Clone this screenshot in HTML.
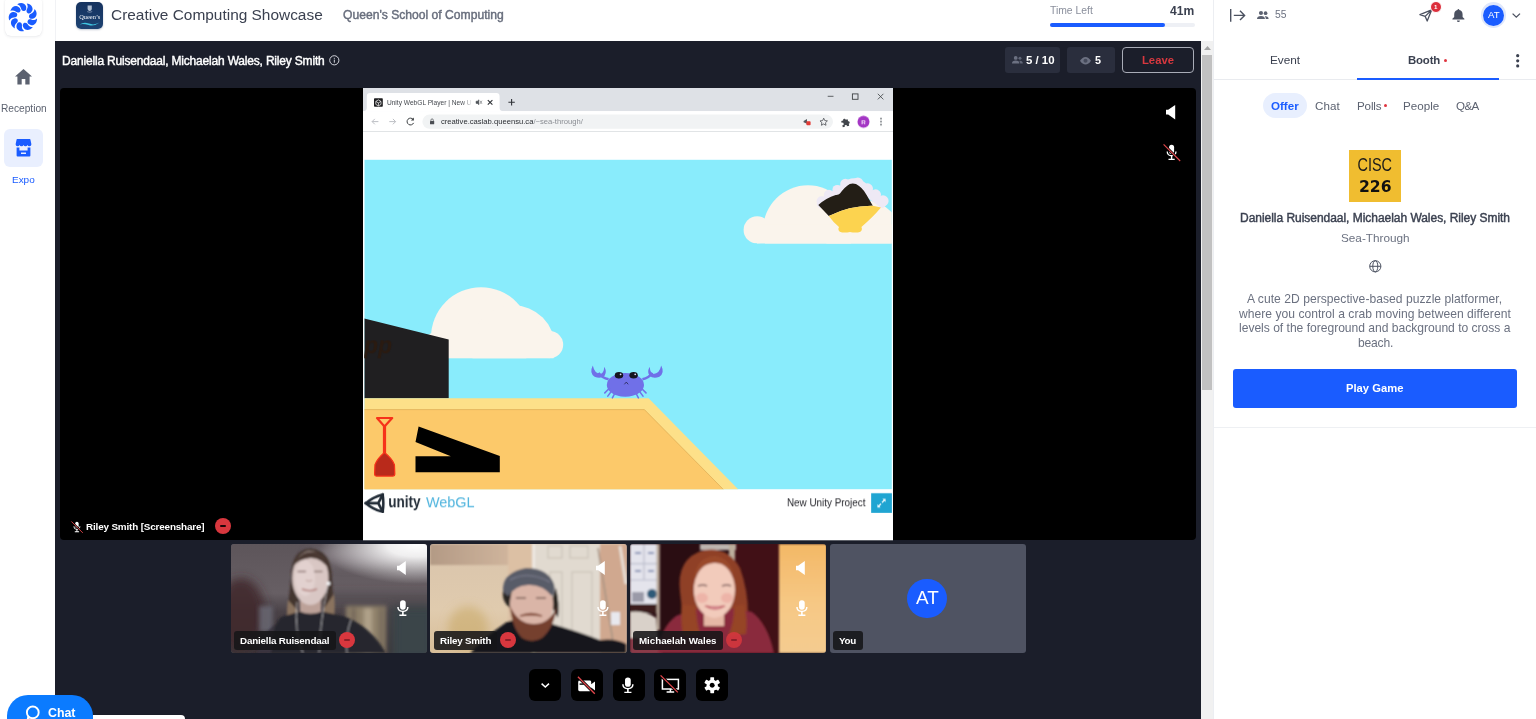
<!DOCTYPE html>
<html lang="en">
<head>
<meta charset="utf-8">
<title>Creative Computing Showcase</title>
<style>
*{box-sizing:border-box;margin:0;padding:0}
html,body{width:1536px;height:719px;overflow:hidden;background:#fff;font-family:"Liberation Sans",sans-serif;color:#3b4150}
body{position:relative}
.a{position:absolute}
svg{position:absolute;overflow:visible;will-change:transform}
.t{position:absolute;white-space:nowrap;line-height:1;will-change:transform}
#side{position:absolute;left:0;top:0;width:56px;height:719px;background:#fff}
#head{position:absolute;left:56px;top:0;width:1158px;height:41px;background:#fff}
#stage{position:absolute;left:55px;top:41px;width:1145.5px;height:678px;background:#1b1e2a}
#sbar{position:absolute;left:1200.5px;top:41px;width:13.5px;height:678px;background:#f1f1f1}
#panel{position:absolute;left:1214px;top:0;width:322px;height:719px;background:#fff}
.chip{position:absolute;background:#2a2e3d;border-radius:3px}
.tag{position:absolute;background:rgba(22,22,24,.88);border-radius:3px}
.minus{position:absolute;width:16px;height:16px;border-radius:50%;background:#d8373e}
.minus:after{content:"";position:absolute;left:5px;top:7px;width:6px;height:2px;background:#8e1f28;border-radius:1px}
.thumb{position:absolute;top:543.6px;width:196.3px;height:109.3px;border-radius:3px;overflow:hidden;background:#4f5362}
.cbtn{position:absolute;top:669px;width:32px;height:32px;border-radius:6px;background:#000}
.minus.k:after{background:#1c0608;left:4.7px;width:6.6px;top:6.8px;height:2.4px}
</style>
</head>
<body>
<!-- sidebar -->
<div id="side">
  <div class="a" style="left:4.5px;top:-4px;width:37.5px;height:40px;border-radius:6px;background:#fff;box-shadow:0 1px 3px rgba(40,50,80,.09),0 0 1px rgba(40,50,80,.10)"></div>
  <svg style="left:8.9px;top:2.7px" width="28" height="28" viewBox="-14 -14 28 28"><g fill="#1a5cff"><path d="M-5.8,-12.8 C-2.5,-15.1 2.2,-14.2 3.1,-10.6 C3.6,-8.4 3.1,-6.4 1.2,-6 C-0.9,-5.7 -1.8,-7.4 -2.1,-8.9 C-2.5,-10.7 -3.7,-12.1 -5.8,-12.8Z" transform="rotate(0)"/><path d="M-5.8,-12.8 C-2.5,-15.1 2.2,-14.2 3.1,-10.6 C3.6,-8.4 3.1,-6.4 1.2,-6 C-0.9,-5.7 -1.8,-7.4 -2.1,-8.9 C-2.5,-10.7 -3.7,-12.1 -5.8,-12.8Z" transform="rotate(40)"/><path d="M-5.8,-12.8 C-2.5,-15.1 2.2,-14.2 3.1,-10.6 C3.6,-8.4 3.1,-6.4 1.2,-6 C-0.9,-5.7 -1.8,-7.4 -2.1,-8.9 C-2.5,-10.7 -3.7,-12.1 -5.8,-12.8Z" transform="rotate(80)"/><path d="M-5.8,-12.8 C-2.5,-15.1 2.2,-14.2 3.1,-10.6 C3.6,-8.4 3.1,-6.4 1.2,-6 C-0.9,-5.7 -1.8,-7.4 -2.1,-8.9 C-2.5,-10.7 -3.7,-12.1 -5.8,-12.8Z" transform="rotate(120)"/><path d="M-5.8,-12.8 C-2.5,-15.1 2.2,-14.2 3.1,-10.6 C3.6,-8.4 3.1,-6.4 1.2,-6 C-0.9,-5.7 -1.8,-7.4 -2.1,-8.9 C-2.5,-10.7 -3.7,-12.1 -5.8,-12.8Z" transform="rotate(160)"/><path d="M-5.8,-12.8 C-2.5,-15.1 2.2,-14.2 3.1,-10.6 C3.6,-8.4 3.1,-6.4 1.2,-6 C-0.9,-5.7 -1.8,-7.4 -2.1,-8.9 C-2.5,-10.7 -3.7,-12.1 -5.8,-12.8Z" transform="rotate(200)"/><path d="M-5.8,-12.8 C-2.5,-15.1 2.2,-14.2 3.1,-10.6 C3.6,-8.4 3.1,-6.4 1.2,-6 C-0.9,-5.7 -1.8,-7.4 -2.1,-8.9 C-2.5,-10.7 -3.7,-12.1 -5.8,-12.8Z" transform="rotate(240)"/><path d="M-5.8,-12.8 C-2.5,-15.1 2.2,-14.2 3.1,-10.6 C3.6,-8.4 3.1,-6.4 1.2,-6 C-0.9,-5.7 -1.8,-7.4 -2.1,-8.9 C-2.5,-10.7 -3.7,-12.1 -5.8,-12.8Z" transform="rotate(280)"/><path d="M-5.8,-12.8 C-2.5,-15.1 2.2,-14.2 3.1,-10.6 C3.6,-8.4 3.1,-6.4 1.2,-6 C-0.9,-5.7 -1.8,-7.4 -2.1,-8.9 C-2.5,-10.7 -3.7,-12.1 -5.8,-12.8Z" transform="rotate(320)"/></g></svg>
  <div class="a" style="left:55px;top:0;width:1px;height:41px;background:#f1f2f5"></div>
  <!-- home -->
  <svg style="left:15px;top:69px" width="17" height="15.5" viewBox="0 0 17 15.5"><path fill="#5c6270" d="M8.5,0 L17,7.6 L14.6,7.6 L14.6,15.5 L10.3,15.5 L10.3,10 L6.7,10 L6.7,15.5 L2.4,15.5 L2.4,7.6 L0,7.6Z"/></svg>
  <!-- expo active -->
  <div class="a" style="left:4.2px;top:129px;width:38.6px;height:38px;border-radius:6px;background:#e9effe"></div>
  <svg style="left:15px;top:139.4px" width="17" height="17.6" viewBox="0 0 17 17.6"><g fill="#1a5cff"><path d="M1.6,0.6 Q1.6,0 2.2,0 L14.8,0 Q15.4,0 15.4,0.6 L16.4,5.2 Q16.4,7.2 14.4,7.2 Q12.9,7.2 12.5,6 Q12,7.2 10.5,7.2 Q9,7.2 8.5,6 Q8,7.2 6.5,7.2 Q5,7.2 4.5,6 Q4.1,7.2 2.6,7.2 Q0.6,7.2 0.6,5.2Z"/><path d="M1.6,8.6 L15.4,8.6 L15.4,16.6 Q15.4,17.6 14.4,17.6 L2.6,17.6 Q1.6,17.6 1.6,16.6Z M4.4,8.6 L4.4,11.4 L12.6,11.4 L12.6,8.6Z M6,13.4 L6,14.9 L11,14.9 L11,13.4Z" fill-rule="evenodd"/></g></svg>
</div>
<!-- header -->
<div id="head"></div>
<div class="a" style="left:75.7px;top:1.6px;width:27.3px;height:27.3px;border-radius:5px;background:linear-gradient(180deg,#16335f,#1d4272);overflow:hidden;box-shadow:0 1px 2px rgba(20,40,80,.25)">
  <svg style="left:0;top:0" width="27.3" height="27.3" viewBox="0 0 27.3 27.3">
    <path d="M11.6,3.4 h4.2 v3.6 q0,1.6 -2.1,2.2 q-2.1,-0.6 -2.1,-2.2z" fill="#c9d3e3" opacity=".85"/>
    <path d="M11.2,9.6 q2.5,1.4 5,0" stroke="#c9d3e3" stroke-width=".7" fill="none" opacity=".7"/>
    <text x="13.7" y="17.4" font-family="Liberation Serif,serif" font-size="6.4" fill="#f4f6fa" text-anchor="middle" textLength="21" lengthAdjust="spacingAndGlyphs">Queen’s</text>
    <path d="M3.6,22.4 Q8,19.6 13,21.6 T23.6,20.6 Q18,24.8 12.6,23 T3.6,22.4Z" fill="#3fc4e0"/>
  </svg>
</div>
<!-- time left bar -->
<div class="a" style="left:1050px;top:23.2px;width:144.5px;height:3.6px;border-radius:2px;background:#eef0f5"></div>
<div class="a" style="left:1050px;top:23.2px;width:115px;height:3.6px;border-radius:2px;background:#1a5cff"></div>
<!-- stage -->
<div id="stage"></div>
<div id="sbar">
  <svg style="left:3.2px;top:4.6px" width="7" height="4" viewBox="0 0 7 4"><path d="M0,4 L3.5,0 L7,4Z" fill="#a3a3a3"/></svg>
  <div class="a" style="left:1.7px;top:13.6px;width:10.2px;height:335px;background:#c1c1c1"></div>
</div>
<!-- info icon -->
<svg style="left:328.6px;top:54.8px" width="10.6" height="10.6" viewBox="0 0 10.6 10.6"><circle cx="5.3" cy="5.3" r="4.6" fill="none" stroke="#e6e8ee" stroke-width=".9"/><rect x="4.85" y="4.6" width=".9" height="3.1" fill="#e6e8ee"/><rect x="4.85" y="2.8" width=".9" height="1" fill="#e6e8ee"/></svg>
<!-- chips -->
<div class="chip" style="left:1005px;top:47.4px;width:55.4px;height:25.4px"></div>
<svg style="left:1011.6px;top:56.4px" width="10.8" height="7.4" viewBox="0 0 10.8 7.4"><g fill="#6c7182"><circle cx="3.7" cy="1.9" r="1.9"/><path d="M0,7.4 Q0,4.6 3.7,4.6 Q7.4,4.6 7.4,7.4Z"/><circle cx="8" cy="2.3" r="1.5" opacity=".85"/><path d="M8.2,7.4 Q8.3,5.6 7.2,4.9 Q10.8,4.6 10.8,7.4Z" opacity=".85"/></g></svg>
<div class="chip" style="left:1067.2px;top:47.4px;width:47.8px;height:25.4px"></div>
<svg style="left:1080.4px;top:56.5px" width="11" height="7.6" viewBox="0 0 10.8 7.4" preserveAspectRatio="none"><path d="M0,3.7 Q2.4,0 5.4,0 Q8.4,0 10.8,3.7 Q8.4,7.4 5.4,7.4 Q2.4,7.4 0,3.7Z" fill="#6c7182"/><circle cx="5.4" cy="3.7" r="2" fill="#454a5b"/></svg>
<div class="a" style="left:1121.6px;top:46.9px;width:72.8px;height:26.3px;border:1px solid #a9acb7;border-radius:4px"></div>
<!-- main video -->
<div class="a" style="left:60.4px;top:87.7px;width:1135.2px;height:452.3px;background:#000;border-radius:4px"></div>
<!-- screenshare -->
<svg style="left:363px;top:87.7px" width="530" height="452.3" viewBox="363 87.7 530 452.3" font-family="Liberation Sans,sans-serif">
  <defs>
    <linearGradient id="fadeTab" x1="0" x2="1" y1="0" y2="0"><stop offset="0" stop-color="#fff" stop-opacity="0"/><stop offset="1" stop-color="#fff"/></linearGradient>
    <clipPath id="cv"><rect x="364.3" y="159.3" width="527.6" height="329.8"/></clipPath>
    <clipPath id="c1"><rect x="364" y="280" width="240" height="78"/></clipPath>
    <clipPath id="c2"><rect x="730" y="170" width="161.9" height="73.2"/></clipPath>
  </defs>
  <rect x="363" y="87.7" width="530" height="452.3" fill="#fff"/>
  <!-- chrome tab strip -->
  <rect x="363" y="87.7" width="530" height="23.2" fill="#dee1e6"/>
  <path d="M363.8,110.9 Q366.6,110.6 366.8,107.8 L366.8,96 Q366.9,92.9 370,92.8 L496.4,92.8 Q499.5,92.9 499.6,96 L499.6,107.8 Q499.8,110.6 502.6,110.9Z" fill="#fff"/>
  <rect x="374" y="98" width="8.8" height="8.4" rx=".8" fill="#1d1d1f"/>
  <path d="M378.4,99.6 l2.6,1.5 v3 l-2.6,1.5 l-2.6,-1.5 v-3z M378.4,102.6 v3 M378.4,102.6 l2.6,-1.5 M378.4,102.6 l-2.6,-1.5" fill="none" stroke="#fff" stroke-width=".7"/>
  <text x="386.9" y="104.3" font-size="6.6" fill="#45494f" textLength="84.7" lengthAdjust="spacingAndGlyphs">Unity WebGL Player | New U</text>
  <rect x="462" y="96" width="11" height="12" fill="url(#fadeTab)"/>
  <path d="M476,100.9 h1.3 l1.6,-1.4 v5 l-1.6,-1.4 h-1.3z M480,100.4 l2,3.2 M482,100.4 l-2,3.2" fill="#50545a" stroke="#50545a" stroke-width=".5"/>
  <path d="M487.8,99.8 l4.6,4.6 M492.4,99.8 l-4.6,4.6" stroke="#2f3237" stroke-width="1.1"/>
  <path d="M508.4,102 h6.4 M511.6,98.8 v6.4" stroke="#2f3237" stroke-width="1.1"/>
  <path d="M827.7,96 h5.8" stroke="#3c4043" stroke-width=".8"/>
  <rect x="852.4" y="93.6" width="5.6" height="5.4" fill="none" stroke="#3c4043" stroke-width=".9"/>
  <path d="M877.8,93.5 l5.6,5.6 M883.4,93.5 l-5.6,5.6" stroke="#3c4043" stroke-width=".8"/>
  <!-- toolbar -->
  <rect x="363" y="110.9" width="530" height="20.3" fill="#fff"/>
  <rect x="363" y="131" width="530" height=".7" fill="#d5d8dc"/>
  <path d="M378.4,121.3 h-6.2 m2.6,-2.7 l-2.7,2.7 l2.7,2.7" fill="none" stroke="#b5b8bd" stroke-width=".9"/>
  <path d="M389.3,121.3 h6.2 m-2.6,-2.7 l2.7,2.7 l-2.7,2.7" fill="none" stroke="#b5b8bd" stroke-width=".9"/>
  <path d="M413.2,119.2 A3.4,3.4 0 1 0 413.6,122.6" fill="none" stroke="#3c4043" stroke-width="1"/>
  <path d="M413.9,117.2 v3 h-3z" fill="#3c4043"/>
  <rect x="422.4" y="114.3" width="410.6" height="14.2" rx="7.1" fill="#f1f3f4"/>
  <rect x="430" y="120.6" width="4.2" height="3.4" rx=".5" fill="#4a4d52"/>
  <path d="M430.9,120.8 v-1 a1.2,1.2 0 0 1 2.4,0 v1" fill="none" stroke="#4a4d52" stroke-width=".7"/>
  <text x="440.9" y="124" font-size="7.6" textLength="142" lengthAdjust="spacingAndGlyphs"><tspan fill="#2b2e33">creative.caslab.queensu.ca</tspan><tspan fill="#8a8d93">/~sea-through/</tspan></text>
  <path d="M803.6,120.6 l3.4,-1.8 v4.6 l-3.4,-1.4z" fill="#55595f"/>
  <rect x="806.4" y="121" width="4.2" height="4" rx=".8" fill="#e23b35"/>
  <path d="M823.7,117.9 l1.1,2.4 l2.6,.3 l-1.9,1.8 l.5,2.6 l-2.3,-1.3 l-2.3,1.3 l.5,-2.6 l-1.9,-1.8 l2.6,-.3z" fill="none" stroke="#4a4d52" stroke-width=".8"/>
  <path d="M841.8,119.6 h2 a1.3,1.3 0 1 1 2.6,0 h2 v2 a1.3,1.3 0 1 1 0,2.6 v2 h-2.4 a1.1,1.1 0 1 0 -2,0 h-2.2 v-2.2 a1.2,1.2 0 1 0 0,-2.2z" fill="#42464b" transform="rotate(-14 845.5 122.5)"/>
  <circle cx="863.5" cy="121.4" r="6" fill="#a436c4"/>
  <text x="863.5" y="123.6" font-size="6.2" fill="#f3dcf8" text-anchor="middle" font-weight="700">R</text>
  <circle cx="881" cy="118.4" r=".8" fill="#55595f"/><circle cx="881" cy="121.4" r=".8" fill="#55595f"/><circle cx="881" cy="124.4" r=".8" fill="#55595f"/>
  <!-- game canvas -->
  <g clip-path="url(#cv)">
    <rect x="364.3" y="159.3" width="527.6" height="329.8" fill="#89ecfc"/>
    <g fill="#faf4ec" clip-path="url(#c1)">
      <circle cx="481" cy="337" r="50"/><circle cx="513" cy="347" r="42"/><circle cx="549.6" cy="344.4" r="13.6"/><circle cx="436" cy="345" r="13"/><rect x="436" y="338" width="114" height="20"/>
    </g>
    <g fill="#faf4ec" clip-path="url(#c2)">
      <circle cx="757.2" cy="229.6" r="13.6"/><circle cx="808" cy="230" r="45"/><circle cx="864" cy="238" r="38"/><rect x="757" y="224" width="136" height="20"/>
    </g>
    <g fill="#eee9f5">
      <path d="M821,203.6 Q828,197 836,193.6 Q840,192 845,186 Q851,180.6 858,182.6 Q866,186.6 871,195 L882,203.4" fill="none" stroke="#eee9f5" stroke-width="8" stroke-linecap="round" stroke-linejoin="round"/>
      <circle cx="821.6" cy="201" r="5"/><circle cx="829" cy="194.6" r="5.2"/><circle cx="837.4" cy="189.6" r="5"/><circle cx="845.4" cy="183.6" r="5.2"/><circle cx="857.8" cy="182.6" r="5.4"/><circle cx="867.6" cy="188.4" r="5.4"/><circle cx="875.6" cy="194.4" r="5.4"/><circle cx="883" cy="200.6" r="5.6"/>
    </g>
    <path d="M818.3,204.6 Q826,197.6 835.7,194.6 Q838.6,194.8 840,193.2 Q844.6,186.6 849.8,183.6 Q853,182.6 856,183.8 Q862.4,187.2 866.6,194.6 L872.8,205.4 Q850,205 828.8,215.6Z" fill="#231e16"/>
    <path d="M828.8,215.6 Q850,205 872.8,205.4 L881,207.3 Q872,218 861.4,226.6 Q862.8,229.6 860.4,231.4 Q856,233 850,231.6 Q844,233 839.8,231.4 Q837.4,229.6 839,226.6 Q833,221.6 828.8,215.6Z" fill="#fcd34f"/>
    <path d="M364.3,318.2 L448.7,339.2 L448.7,398 L364.3,398Z" fill="#201f21"/>
    <text x="364" y="353" font-size="23" font-weight="700" font-style="italic" fill="#2f1a0c" opacity=".7">pp</text>
    <path d="M364.3,398 L648.6,398 L738.4,489.2 L364.3,489.2Z" fill="#fde089"/>
    <path d="M364.3,409.3 L644.4,409.3 L723.4,489.2 L364.3,489.2Z" fill="#fcc96a"/>
    <path d="M364.3,409.3 L644.4,409.3 L723.4,489.2" fill="none" stroke="#d4a24c" stroke-width=".7" opacity=".8"/>
    <!-- crab -->
    <g fill="#7070e8" stroke="#7070e8">
      <ellipse cx="625.4" cy="384.6" rx="18.6" ry="11.8" stroke="none"/>
      <path d="M608.6,379 Q602,377.6 598.6,372.6" fill="none" stroke-width="2.4"/>
      <path d="M642.4,379 Q649,377.6 652.4,372.6" fill="none" stroke-width="2.4"/>
      <path d="M592.8,365.2 Q589,372.6 594.6,376.4 Q600.6,378.8 604.6,375.4 Q607.4,370.8 604,366.4 Q604.6,372 600.6,373.6 Q594.6,373.6 592.8,365.2Z" stroke="none"/>
      <path d="M661.2,365.2 Q665,372.6 659.4,376.4 Q653.4,378.8 649.4,375.4 Q646.6,370.8 650,366.4 Q649.4,372 653.4,373.6 Q659.4,373.6 661.2,365.2Z" stroke="none"/>
      <path d="M609.4,388 l-4.6,4.6 M611.4,391 l-3.6,4.8 M614.6,393.4 l-2.2,4.2 M641.4,388 l4.6,4.6 M639.4,391 l3.6,4.8 M636.2,393.4 l2.2,4.2" fill="none" stroke-width="1.5" stroke-linecap="round"/>
    </g>
    <ellipse cx="619" cy="375" rx="4.2" ry="3.3" fill="#15151f"/><ellipse cx="633.6" cy="375" rx="4.2" ry="3.3" fill="#15151f"/>
    <circle cx="620.6" cy="374" r=".9" fill="#d8d8f0"/><circle cx="635.2" cy="374" r=".9" fill="#d8d8f0"/>
    <path d="M624.4,384 l1.9,-2.2 l1.9,2.2" fill="none" stroke="#23234a" stroke-width=".8"/>
    <!-- shovel -->
    <path d="M377,417.7 L392.2,417.7 L384.5,426.2Z" fill="none" stroke="#f6321a" stroke-width="2.2" stroke-linejoin="round"/>
    <path d="M384.5,425.6 L384.5,454" stroke="#f6321a" stroke-width="3.2"/>
    <path d="M384.5,452.2 Q377,458.6 375,464.4 L374.6,474 Q374.6,475.8 376.4,475.8 L393,475.8 Q394.8,475.8 394.8,474 L394.4,464.4 Q392.4,458.6 384.5,452.2Z" fill="#b92a1b" stroke="#f6321a" stroke-width="1.3" stroke-linejoin="round"/>
    <!-- wedge -->
    <path d="M418.6,426.2 L499.8,455.6 L499.8,472 L415.5,472 L415.5,456 L450.8,456 L415.5,441.6Z" fill="#000"/>
  </g>
  <!-- footer -->
  <g fill="none" stroke="#222c37" stroke-width="2.6" stroke-linejoin="round" stroke-linecap="round">
    <path d="M365.8,502.9 Q373,496.8 382.6,494.2 Q384,502.9 382.6,511.6 Q373,509 365.8,502.9Z"/>
    <path d="M365.6,502.9 L378.2,502.9 M382.8,494.2 L378.2,502.9 L382.8,511.6"/>
  </g>
  <text x="388.3" y="506.8" font-size="16.2" font-weight="700" fill="#222c37" textLength="32.2" lengthAdjust="spacingAndGlyphs">unity</text>
  <text x="426" y="506.8" font-size="15.3" fill="#4db3dd" textLength="48.5" lengthAdjust="spacingAndGlyphs">WebGL</text>
  <text x="787" y="505.8" font-size="10.2" fill="#1e1e24" textLength="78.4" lengthAdjust="spacingAndGlyphs">New Unity Project</text>
  <rect x="871.1" y="492.9" width="20.8" height="19.9" fill="#20a5d2"/>
  <path d="M885.6,498.6 h-3.2 l1.1,1.1 l-2,2 l1,1 l2,-2 l1.1,1.1z M877.4,507.2 h3.2 l-1.1,-1.1 l2,-2 l-1,-1 l-2,2 l-1.1,-1.1z" fill="#e9f7fc"/>
</svg>
<!-- main video overlays -->
<svg style="left:1165.8px;top:105px" width="9.2" height="14.4" viewBox="0 0 9.2 14.4"><path d="M0,4.8 L2.2,4.8 L9.2,0 L9.2,14.4 L2.2,9.6 L0,9.6Z" fill="#fff"/></svg>
<svg style="left:1163px;top:143.6px" width="18" height="18" viewBox="0 0 18 18"><g fill="#fff"><rect x="6.1" y=".8" width="5" height="9.2" rx="2.5"/><path d="M3.6,7.4 h1.3 a3.7,3.7 0 0 0 7.4,0 h1.3 a5,5 0 0 1 -4.3,4.9 v2.4 h2.4 v1.4 h-6.2 v-1.4 h2.4 v-2.4 a5,5 0 0 1 -4.3,-4.9z"/></g><path d="M.6,.4 L17.2,17" stroke="#000" stroke-width="2.6"/><path d="M.6,.4 L17.2,17" stroke="#e5484d" stroke-width="1.1"/></svg>
<svg style="left:70.6px;top:521.4px" width="12.4" height="12.8" viewBox="0 0 18 18"><g fill="#fff"><rect x="6.1" y=".8" width="5" height="9.2" rx="2.5"/><path d="M3.6,7.4 h1.3 a3.7,3.7 0 0 0 7.4,0 h1.3 a5,5 0 0 1 -4.3,4.9 v2.4 h2.4 v1.4 h-6.2 v-1.4 h2.4 v-2.4 a5,5 0 0 1 -4.3,-4.9z"/></g><path d="M.6,.4 L17.2,17" stroke="#000" stroke-width="2.6"/><path d="M.6,.4 L17.2,17" stroke="#e5484d" stroke-width="1.3"/></svg>
<div class="minus k" style="left:214.9px;top:517.8px"></div>
<!-- thumbnails -->
<div class="thumb" style="left:230.8px">
  <svg style="left:0;top:0" width="196.4" height="109.3" viewBox="0 0 196.4 109.3">
    <defs>
      <filter id="b1" x="-20%" y="-20%" width="140%" height="140%"><feGaussianBlur stdDeviation="0.8"/></filter>
      <filter id="b2" x="-20%" y="-20%" width="140%" height="140%"><feGaussianBlur stdDeviation="2"/></filter>
      <filter id="b3" x="-30%" y="-30%" width="160%" height="160%"><feGaussianBlur stdDeviation="5"/></filter>
      <linearGradient id="t1bg" x1="0" y1="0" x2="0" y2="1"><stop offset="0" stop-color="#5d555a"/><stop offset=".45" stop-color="#675f64"/><stop offset=".62" stop-color="#4a4247"/><stop offset="1" stop-color="#3b3438"/></linearGradient>
      <radialGradient id="t1fl" cx="186" cy="2" r="78" gradientUnits="userSpaceOnUse" gradientTransform="translate(188 0) scale(1.25 .5) translate(-188 0)"><stop offset="0" stop-color="#fff"/><stop offset=".3" stop-color="#fff" stop-opacity=".9"/><stop offset="1" stop-color="#fff" stop-opacity="0"/></radialGradient>
    </defs>
    <rect width="196.4" height="109.3" fill="url(#t1bg)"/>
    <g filter="url(#b3)">
      <ellipse cx="125" cy="12" rx="50" ry="10" fill="#857d83" opacity=".6"/>
      <ellipse cx="10" cy="70" rx="24" ry="36" fill="#40282e" opacity=".9"/>
      <rect x="160" y="62" width="44" height="56" fill="#3a4549"/>
      <rect x="96" y="50" width="110" height="6" fill="#4e464c"/>
    </g>
    <rect width="196.4" height="109.3" fill="url(#t1fl)"/>
    <g filter="url(#b2)">
      <rect x="28" y="62" width="14" height="26" fill="#6c6c76" opacity=".8"/>
      <rect x="115" y="62" width="40" height="50" fill="#8f816b"/>
      <rect x="120" y="64" width="5" height="48" fill="#75685a"/><rect x="133" y="64" width="8" height="48" fill="#b0a28a"/><rect x="148" y="64" width="4" height="48" fill="#75685a"/>
    </g>
    <g filter="url(#b1)">
      <path d="M60,34 Q60,5 80,4.500 Q100,6 101,34 L103,70 Q100,80 93,76 L91,52 L68,52 L66,76 Q60,82 56,72Z" fill="#43342f"/>
      <path d="M57,56 Q54,76 60,80 L68,68Z M103,50 Q106,76 98,80 L92,66Z" fill="#8a735e"/>
      <rect x="69" y="54" width="21" height="18" fill="#bca198"/>
      <ellipse cx="79.4" cy="34" rx="18.2" ry="27" fill="#d9c7c4"/>
      <ellipse cx="74" cy="34" rx="10" ry="18" fill="#e6d6d4" opacity=".7"/>
      <path d="M62.500,22 Q69,7 81,7.500 Q95,9 98.500,26 Q90,13 79,14 Q68,15 62.500,22Z" fill="#4a3932"/>
      <path d="M71,45 Q78.500,48.500 86,45" stroke="#b07a76" stroke-width="1.700" fill="none"/>
      <path d="M66.500,27.500 h8.500 M83,27.500 h8.500" stroke="#8d7672" stroke-width="1.500"/>
      <path d="M75,36 q3,2.500 6,0" stroke="#c4a8a4" stroke-width="1.200" fill="none"/>
      <path d="M36,109.300 Q40,84 50,73 L69,67.500 Q79,72 91,67.500 L112,72 Q140,82 155,109.300Z" fill="#27262d"/>
      <path d="M26,109.300 Q30,92 44,80 L40,109.300Z" fill="#3a3640"/>
      <path d="M66,58 Q63,88 72,109.300 M96.500,42 Q89,80 88,109.300 M120,76 Q114,92 116,109.300" stroke="#d4d4d8" stroke-width=".9" fill="none" opacity=".8"/>
      <circle cx="97.400" cy="39.500" r="1.900" fill="#f6f6f8"/>
    </g>
  </svg>
</div>
<div class="thumb" style="left:430.3px">
  <svg style="left:0;top:0" width="196.4" height="109.3" viewBox="0 0 196.4 109.3">
    <defs><linearGradient id="t2band" x1="0" x2="1" y1="0" y2="0"><stop offset="0" stop-color="#b39a85"/><stop offset="1" stop-color="#cfb49c"/></linearGradient><linearGradient id="t2bg" x1="0" y1="0" x2="0" y2="1"><stop offset="0" stop-color="#d9c4ac"/><stop offset=".6" stop-color="#e0cbae"/><stop offset="1" stop-color="#d8be98"/></linearGradient></defs>
    <rect width="196.4" height="109.3" fill="url(#t2bg)"/>
    <g filter="url(#b3)"><ellipse cx="38" cy="84" rx="20" ry="22" fill="#c6a55c" opacity=".5"/></g>
    <g filter="url(#b1)">
      <rect x="0" y="0" width="78" height="21" fill="url(#t2band)"/>
      <rect x="78" y="0" width="25" height="109" fill="#dcc0a4"/>
      <rect x="102.4" y="0" width="68" height="109.3" fill="#e1dad0"/>
      <rect x="102.4" y="0" width="2.4" height="109.3" fill="#f0ece6"/>
      <rect x="118" y="2" width="14" height="12" fill="none" stroke="#cbc3b8" stroke-width="1.2"/><rect x="140" y="2" width="18" height="12" fill="none" stroke="#cbc3b8" stroke-width="1.2"/>
      <rect x="120" y="28" width="12" height="62" fill="none" stroke="#cbc3b8" stroke-width="1.2"/><rect x="142" y="28" width="20" height="70" fill="none" stroke="#cbc3b8" stroke-width="1.2"/>
      <rect x="170" y="0" width="27" height="109.3" fill="#d0a88f"/>
      <path d="M168,4 L184,104" stroke="#a89484" stroke-width="1.6"/><path d="M190,2 L196,40" stroke="#e6ddd4" stroke-width="3"/>
      <rect x="181" y="68" width="9" height="13" fill="#e8e8ee"/>
      <path d="M40,109.3 Q56,92 74,80 Q80,74 92,78 L122,80 Q150,88 170,96 Q186,94 196.4,100 L196.4,109.3Z" fill="#17161b"/>
      <path d="M74,44 Q70,56 80,64 L82,44Z M126,44 Q130,60 128,74 L120,60Z" fill="#2c2624"/>
      <ellipse cx="101.6" cy="60" rx="21.6" ry="26" fill="#dab5a7"/>
      <path d="M80,62 Q82,84 92,94 Q102,100 112,94 Q124,84 127,62 Q120,80 104,80 Q88,80 80,62Z" fill="#74402f"/>
      <path d="M90,72 Q101,67 112,72 Q101,70 90,72Z" fill="#8a5442" stroke="#8a5442" stroke-width="1.4"/>
      <path d="M73,44 Q74,28 96,24 Q118,24 124,40 Q126,48 122,52 Q112,40 98,41 Q84,42 79,52 Q73,50 73,44Z" fill="#595b68"/>
      <path d="M80,36 Q98,26 120,38" stroke="#7d8090" stroke-width="1.6" fill="none" opacity=".7"/>
      <path d="M86,54 h10 M106,54 h10" stroke="#7a5c54" stroke-width="1.6"/>
    </g>
  </svg>
</div>
<div class="thumb" style="left:629.9px">
  <svg style="left:0;top:0" width="196.4" height="109.3" viewBox="0 0 196.4 109.3">
    <defs><linearGradient id="t3w" x1="0" y1="0" x2="0" y2="1"><stop offset="0" stop-color="#f3b866"/><stop offset=".55" stop-color="#f6c885"/><stop offset="1" stop-color="#f4cc90"/></linearGradient></defs>
    <rect width="196.4" height="109.3" fill="#2a0d12"/><rect x="100" y="0" width="50" height="109.3" fill="#4a1218" opacity=".75"/>
    <g filter="url(#b1)">
      <rect x="0" y="0" width="29" height="62" fill="#e4e4ec"/>
      <path d="M0,19.6 h28 M0,36 h28 M14,0 v36" stroke="#b9bccb" stroke-width="1.2"/>
      <path d="M5,9 h6 M18,9 h6 M5,27 h6 M18,27 h6" stroke="#5f6fa0" stroke-width="1.4"/>
      <circle cx="22" cy="50" r="5" fill="#2d5a78"/><rect x="2" y="48" width="12" height="10" fill="#9a9aa8"/>
      <rect x="0" y="60" width="29" height="9" fill="#3a1c1e"/>
      <path d="M0,68 Q14,66 26,74 L28,96 L0,96Z" fill="#d9d1c9"/>
      <rect x="0" y="94" width="32" height="16" fill="#8a3a4a"/>
      <rect x="26.6" y="0" width="3.2" height="86" fill="#b5a596"/>
      <rect x="70" y="0" width="36" height="6" fill="#bdb6b0"/><rect x="99" y="0" width="6" height="18" fill="#bcae9c"/>
      <rect x="149" y="0" width="48" height="109.3" fill="url(#t3w)"/>
      <path d="M50,48 Q46,14 74,6 Q98,2 110,24 Q118,46 118,70 L120,96 L48,96 Q54,74 50,48Z" fill="#8f3f26"/>
      <path d="M28,109.3 Q30,84 46,72 L66,64 Q84,72 104,64 L122,68 Q138,80 144,109.3Z" fill="#8a2a3c"/>
      <path d="M52,60 Q50,84 54,92 L70,90 Q66,76 66,62Z M104,62 Q104,80 98,92 L116,90 Q118,74 114,60Z" fill="#964428"/>
      <rect x="74" y="66" width="20" height="16" fill="#e6b8a6"/>
      <ellipse cx="84.4" cy="46" rx="20.6" ry="28" fill="#f2cbbb"/>
      <path d="M64,36 Q66,12 86,12 Q100,14 104,32 Q96,18 84,19 Q70,20 64,36Z" fill="#9a4a2c"/>
      <ellipse cx="72" cy="54" rx="6" ry="5" fill="#eba99f" opacity=".7"/><ellipse cx="97" cy="54" rx="6" ry="5" fill="#eba99f" opacity=".7"/>
      <path d="M75,62 Q85,68 95,62 Q85,64 75,62Z" fill="#fff" stroke="#c4606a" stroke-width="1.3"/>
      <path d="M68,42 q5,-2 9,0 M92,42 q5,-2 9,0" stroke="#7a5a58" stroke-width="1.4" fill="none"/>
    </g>
  </svg>
</div>
<div class="thumb" style="left:829.5px;background:#4f5362"></div>
<div class="a" style="left:907.4px;top:578.9px;width:39.6px;height:39.6px;border-radius:50%;background:#1a5cff"></div>
<!-- thumb overlays -->
<svg style="left:396.8px;top:561px" width="8.8" height="13.9" viewBox="0 0 9.2 14.4" preserveAspectRatio="none"><path d="M0,4.8 L2.2,4.8 L9.2,0 L9.2,14.4 L2.2,9.6 L0,9.6Z" fill="#fff"/></svg>
<svg style="left:596.4px;top:561px" width="8.8" height="13.9" viewBox="0 0 9.2 14.4" preserveAspectRatio="none"><path d="M0,4.8 L2.2,4.8 L9.2,0 L9.2,14.4 L2.2,9.6 L0,9.6Z" fill="#fff"/></svg>
<svg style="left:796px;top:561px" width="8.8" height="13.9" viewBox="0 0 9.2 14.4" preserveAspectRatio="none"><path d="M0,4.8 L2.2,4.8 L9.2,0 L9.2,14.4 L2.2,9.6 L0,9.6Z" fill="#fff"/></svg>
<svg style="left:397.2px;top:599.7px" width="12" height="16.6" viewBox="3.4 .6 10.6 16.2" preserveAspectRatio="none"><g fill="#fff"><rect x="6.1" y=".8" width="5" height="9.2" rx="2.5"/><path d="M3.6,7.4 h1.3 a3.7,3.7 0 0 0 7.4,0 h1.3 a5,5 0 0 1 -4.3,4.9 v2.4 h2.4 v1.4 h-6.2 v-1.4 h2.4 v-2.4 a5,5 0 0 1 -4.3,-4.9z"/></g></svg>
<svg style="left:596.8px;top:599.7px" width="12" height="16.6" viewBox="3.4 .6 10.6 16.2" preserveAspectRatio="none"><g fill="#fff"><rect x="6.1" y=".8" width="5" height="9.2" rx="2.5"/><path d="M3.6,7.4 h1.3 a3.7,3.7 0 0 0 7.4,0 h1.3 a5,5 0 0 1 -4.3,4.9 v2.4 h2.4 v1.4 h-6.2 v-1.4 h2.4 v-2.4 a5,5 0 0 1 -4.3,-4.9z"/></g></svg>
<svg style="left:796.4px;top:599.7px" width="12" height="16.6" viewBox="3.4 .6 10.6 16.2" preserveAspectRatio="none"><g fill="#fff"><rect x="6.1" y=".8" width="5" height="9.2" rx="2.5"/><path d="M3.6,7.4 h1.3 a3.7,3.7 0 0 0 7.4,0 h1.3 a5,5 0 0 1 -4.3,4.9 v2.4 h2.4 v1.4 h-6.2 v-1.4 h2.4 v-2.4 a5,5 0 0 1 -4.3,-4.9z"/></g></svg>
<div class="tag" style="left:234.3px;top:631.3px;width:101.5px;height:19px"></div>
<div class="tag" style="left:434px;top:631.3px;width:62.8px;height:19px"></div>
<div class="tag" style="left:633px;top:631.3px;width:90px;height:19px"></div>
<div class="tag" style="left:833.2px;top:631.3px;width:29.4px;height:19px"></div>
<div class="minus" style="left:339.2px;top:631.5px"></div>
<div class="minus" style="left:500.1px;top:631.5px"></div>
<div class="minus" style="left:726.3px;top:631.5px;opacity:.86"></div>
<!-- controls -->
<div class="cbtn" style="left:528.8px"></div>
<div class="cbtn" style="left:570.7px"></div>
<div class="cbtn" style="left:612.6px"></div>
<div class="cbtn" style="left:654.4px"></div>
<div class="cbtn" style="left:696.2px"></div>
<svg style="left:540.6px;top:683px" width="8.6" height="4.8" viewBox="0 0 8.6 4.8"><path d="M.6,.6 L4.3,4 L8,.6" fill="none" stroke="#fff" stroke-width="1.5"/></svg>
<svg style="left:577px;top:675.5px" width="19" height="19" viewBox="0 0 19 19"><path d="M1.2,6 Q1.2,4.6 2.6,4.6 L12.6,4.6 Q14.2,4.6 14.2,6 L14.2,8.2 L18,5.4 L18,14.4 L14.2,11.6 L14.2,13.8 Q14.2,15.2 12.6,15.2 L2.6,15.2 Q1.2,15.2 1.2,13.8Z" fill="#fff"/><rect x="2.6" y="7.4" width="4.2" height="1.4" fill="#000"/><path d="M.9,.7 L17.8,17.7" stroke="#000" stroke-width="3"/><path d="M.9,.7 L17.8,17.7" stroke="#e5484d" stroke-width="1.3"/></svg>
<svg style="left:621.4px;top:676.6px" width="14" height="17" viewBox="2.6 .4 12.2 16.6" preserveAspectRatio="none"><g fill="#fff"><rect x="6.1" y=".8" width="5" height="9.2" rx="2.5"/><path d="M3.6,7.4 h1.3 a3.7,3.7 0 0 0 7.4,0 h1.3 a5,5 0 0 1 -4.3,4.9 v2.4 h2.4 v1.4 h-6.2 v-1.4 h2.4 v-2.4 a5,5 0 0 1 -4.3,-4.9z"/></g></svg>
<svg style="left:660px;top:675px" width="20" height="18.5" viewBox="0 0 20 18.5"><rect x="2.4" y="4.4" width="16" height="9.6" fill="none" stroke="#fff" stroke-width="1.5"/><path d="M6.6,17 h7.6 M10.4,14 v3" stroke="#fff" stroke-width="1.5"/><path d="M.6,.4 L17.8,17.4" stroke="#000" stroke-width="3"/><path d="M.6,.4 L17.8,17.4" stroke="#e5484d" stroke-width="1.3"/></svg>
<svg style="left:704px;top:677.4px" width="16.4" height="16.4" viewBox="-8.2 -8.2 16.4 16.4"><g fill="#fff"><circle r="5.6"/><rect x="-1.9" y="-8" width="3.8" height="16" rx=".6"/><rect x="-1.9" y="-8" width="3.8" height="16" rx=".6" transform="rotate(60)"/><rect x="-1.9" y="-8" width="3.8" height="16" rx=".6" transform="rotate(120)"/></g><circle r="2.5" fill="#000"/></svg>
<!-- chat widget -->
<div class="a" style="left:93px;top:715px;width:92px;height:8px;background:#fff;border-top-right-radius:4px;box-shadow:0 0 1px rgba(0,0,0,.3)"></div>
<div class="a" style="left:7px;top:695px;width:86.2px;height:44px;border-radius:21px;background:#0b7bff"></div>
<svg style="left:25px;top:704.6px" width="16" height="16" viewBox="0 0 16 16"><circle cx="7.8" cy="7.4" r="5.9" fill="none" stroke="#fff" stroke-width="1.9"/><path d="M2.6,10.4 L1.6,15 L6,12.8Z" fill="#fff"/></svg>
<!-- right panel -->
<div id="panel"></div>
<div class="a" style="left:1213.4px;top:0;width:1px;height:719px;background:#eceef2"></div>
<svg style="left:1229.6px;top:8.8px" width="15.6" height="12.8" viewBox="0 0 15.6 12.8"><path d="M.7,0 V12.8 M3.8,6.4 H14.6 M10,1.8 L14.6,6.4 L10,11" fill="none" stroke="#4b5160" stroke-width="1.4"/></svg>
<svg style="left:1257.4px;top:11.4px" width="11.6" height="8" viewBox="0 0 10.8 7.4" preserveAspectRatio="none"><g fill="#5b6170"><circle cx="3.7" cy="1.9" r="1.9"/><path d="M0,7.4 Q0,4.6 3.7,4.6 Q7.4,4.6 7.4,7.4Z"/><circle cx="8" cy="2" r="1.7"/><path d="M8.2,7.4 Q8.3,5.6 7.2,4.8 Q10.8,4.4 10.8,7.4Z"/></g></svg>
<svg style="left:1419px;top:9px" width="14" height="13" viewBox="0 0 14 13"><path d="M.9,5.6 L12.6,.9 L8.2,12 L6.2,7.4Z M6.2,7.4 L12.4,1.1" fill="none" stroke="#4b5160" stroke-width="1.3" stroke-linejoin="round"/></svg>
<div class="a" style="left:1429.6px;top:1.4px;width:12px;height:12px;border-radius:50%;background:#dc2f3c;border:.8px solid #fff"></div>
<svg style="left:1452.4px;top:8.8px" width="12.8" height="13" viewBox="0 0 12.8 13"><path d="M6.4,0 Q7.3,0 7.3,.9 Q10.6,1.8 10.6,5.4 L10.6,8 L12.4,9.8 L12.4,10.6 L.4,10.6 L.4,9.8 L2.2,8 L2.2,5.4 Q2.2,1.8 5.5,.9 Q5.5,0 6.4,0Z M4.9,11.4 h3 a1.5,1.5 0 0 1 -3,0Z" fill="#4b5160"/></svg>
<div class="a" style="left:1480.6px;top:2.2px;width:25.8px;height:25.8px;border-radius:50%;background:#dfe7fb"></div>
<div class="a" style="left:1483px;top:4.6px;width:21px;height:21px;border-radius:50%;background:#1a5cff"></div>
<svg style="left:1511.6px;top:13px" width="8.6" height="5" viewBox="0 0 8.6 5"><path d="M.6,.6 L4.3,4.2 L8,.6" fill="none" stroke="#4b5160" stroke-width="1.3"/></svg>
<!-- tabs -->
<div class="a" style="left:1214px;top:79px;width:322px;height:1px;background:#e9ebef"></div>
<div class="a" style="left:1356.6px;top:78px;width:142.2px;height:2px;background:#1a5cff"></div>
<div class="a" style="left:1444.2px;top:59.2px;width:3px;height:3px;border-radius:50%;background:#e0343f"></div>
<svg style="left:1515.6px;top:53.8px" width="3.4" height="13.6" viewBox="0 0 3.4 13.6"><circle cx="1.7" cy="1.7" r="1.6" fill="#3b4150"/><circle cx="1.7" cy="6.8" r="1.6" fill="#3b4150"/><circle cx="1.7" cy="11.9" r="1.6" fill="#3b4150"/></svg>
<div class="a" style="left:1263.3px;top:92.8px;width:44px;height:25px;border-radius:12.5px;background:#e8effe"></div>
<div class="a" style="left:1384px;top:103.8px;width:3px;height:3px;border-radius:50%;background:#e0343f"></div>
<!-- booth card -->
<div class="a" style="left:1349.1px;top:150px;width:51.8px;height:51.9px;background:#f0bd30"></div>
<svg style="left:1368.6px;top:259.9px" width="12.6" height="12.6" viewBox="-6.3 -6.3 12.6 12.6"><g fill="none" stroke="#4b5160" stroke-width="1"><circle r="5.6"/><ellipse rx="2.5" ry="5.6"/><path d="M-5.6,0 H5.6"/></g></svg>
<div class="a" style="left:1233.4px;top:369px;width:283.2px;height:38.5px;border-radius:3px;background:#1a5cff"></div>
<div class="a" style="left:1214px;top:426.6px;width:322px;height:1px;background:#eef0f3"></div>
<!-- text -->
<div class="t" style="left:0.6px;top:104.09px;font-size:10.17px;font-weight:400;color:#5c6270">Reception</div>
<div class="t" style="left:12.0px;top:174.80px;font-size:9.96px;font-weight:400;color:#1a5cff">Expo</div>
<div class="t" style="left:110.7px;top:7.14px;font-size:15.43px;font-weight:400;color:#3b4150">Creative Computing Showcase</div>
<div class="t" style="left:342.9px;top:9.00px;font-size:12.14px;font-weight:400;color:#676d7c;-webkit-text-stroke:.42px #676d7c">Queen&#x27;s School of Computing</div>
<div class="t" style="left:1050.3px;top:5.59px;font-size:10.36px;font-weight:400;color:#8a8f9c">Time Left</div>
<div class="t" style="left:1170.3px;top:4.52px;font-size:12.09px;font-weight:700;color:#3b4150">41m</div>
<div class="t" style="left:62.2px;top:55.07px;font-size:12.00px;font-weight:400;color:#ffffff;letter-spacing:-0.187px;-webkit-text-stroke:.42px #ffffff">Daniella Ruisendaal, Michaelah Wales, Riley Smith</div>
<div class="t" style="left:1025.8px;top:55.26px;font-size:11.43px;font-weight:700;color:#ffffff">5 / 10</div>
<div class="t" style="left:1095.3px;top:54.78px;font-size:10.79px;font-weight:700;color:#ffffff">5</div>
<div class="t" style="left:1141.9px;top:54.55px;font-size:11.25px;font-weight:700;color:#d8383f">Leave</div>
<div class="t" style="left:1274.8px;top:10.01px;font-size:10.34px;font-weight:400;color:#6b7180">55</div>
<div class="t" style="left:1434.0px;top:4.43px;font-size:6.11px;font-weight:700;color:#ffffff">1</div>
<div class="t" style="left:1487.6px;top:10.36px;font-size:9.64px;font-weight:400;color:#ffffff">AT</div>
<div class="t" style="left:1270.2px;top:55.07px;font-size:11.80px;font-weight:400;color:#3b4150;letter-spacing:-0.036px">Event</div>
<div class="t" style="left:1408.3px;top:54.67px;font-size:11.40px;font-weight:700;color:#3b4150;letter-spacing:-0.165px">Booth</div>
<div class="t" style="left:1271.2px;top:99.57px;font-size:11.60px;font-weight:700;color:#1a5cff;letter-spacing:-0.004px">Offer</div>
<div class="t" style="left:1315.3px;top:99.57px;font-size:11.60px;font-weight:400;color:#5c6270;letter-spacing:0.099px">Chat</div>
<div class="t" style="left:1356.8px;top:99.57px;font-size:11.60px;font-weight:400;color:#5c6270;letter-spacing:-0.130px">Polls</div>
<div class="t" style="left:1403.3px;top:99.57px;font-size:11.60px;font-weight:400;color:#5c6270;letter-spacing:0.029px">People</div>
<div class="t" style="left:1456.1px;top:99.57px;font-size:11.60px;font-weight:400;color:#5c6270;letter-spacing:-0.602px">Q&amp;A</div>
<div class="t" style="left:1240.0px;top:212.27px;font-size:12.00px;font-weight:400;color:#3b4150;letter-spacing:-0.034px;-webkit-text-stroke:.42px #3b4150">Daniella Ruisendaal, Michaelah Wales, Riley Smith</div>
<div class="t" style="left:1340.8px;top:232.29px;font-size:11.75px;font-weight:400;color:#6b7180">Sea-Through</div>
<div class="t" style="left:1247.4px;top:293.02px;font-size:12.10px;font-weight:400;color:#6b7180;letter-spacing:0.035px">A cute 2D perspective-based puzzle platformer,</div>
<div class="t" style="left:1239.1px;top:307.52px;font-size:12.10px;font-weight:400;color:#6b7180;letter-spacing:0.022px">where you control a crab moving between different</div>
<div class="t" style="left:1239.4px;top:322.02px;font-size:12.10px;font-weight:400;color:#6b7180;letter-spacing:-0.017px">levels of the foreground and background to cross a</div>
<div class="t" style="left:1357.5px;top:336.52px;font-size:12.10px;font-weight:400;color:#6b7180;letter-spacing:-0.190px">beach.</div>
<div class="t" style="left:1346.4px;top:382.66px;font-size:11.22px;font-weight:700;color:#ffffff">Play Game</div>
<div class="t" style="left:86.2px;top:522.33px;font-size:9.90px;font-weight:700;color:#ffffff;letter-spacing:-0.156px">Riley Smith [Screenshare]</div>
<div class="t" style="left:240.2px;top:636.38px;font-size:9.80px;font-weight:700;color:#ffffff;letter-spacing:-0.168px">Daniella Ruisendaal</div>
<div class="t" style="left:439.9px;top:636.38px;font-size:9.80px;font-weight:700;color:#ffffff;letter-spacing:-0.197px">Riley Smith</div>
<div class="t" style="left:639.1px;top:636.38px;font-size:9.80px;font-weight:700;color:#ffffff;letter-spacing:-0.038px">Michaelah Wales</div>
<div class="t" style="left:839.4px;top:636.38px;font-size:9.80px;font-weight:700;color:#ffffff;letter-spacing:-0.328px">You</div>
<div class="t" style="left:916.0px;top:589.23px;font-size:18.86px;font-weight:400;color:#ffffff">AT</div>
<div class="t" style="left:47.5px;top:706.98px;font-size:12.37px;font-weight:700;color:#ffffff">Chat</div>
<div class="t" style="left:1359.0px;top:180.35px;font-size:15.62px;font-weight:700;color:#111111;font-family:'DejaVu Sans','Liberation Sans',sans-serif">226</div>
<svg style="left:1349px;top:150px" width="52" height="52" viewBox="1349 150 52 52"><text x="1357.5" y="171.2" font-family="Liberation Sans,sans-serif" font-size="18.2" fill="#1a1a1a" textLength="34.5" lengthAdjust="spacingAndGlyphs">CISC</text></svg>
</body>
</html>
